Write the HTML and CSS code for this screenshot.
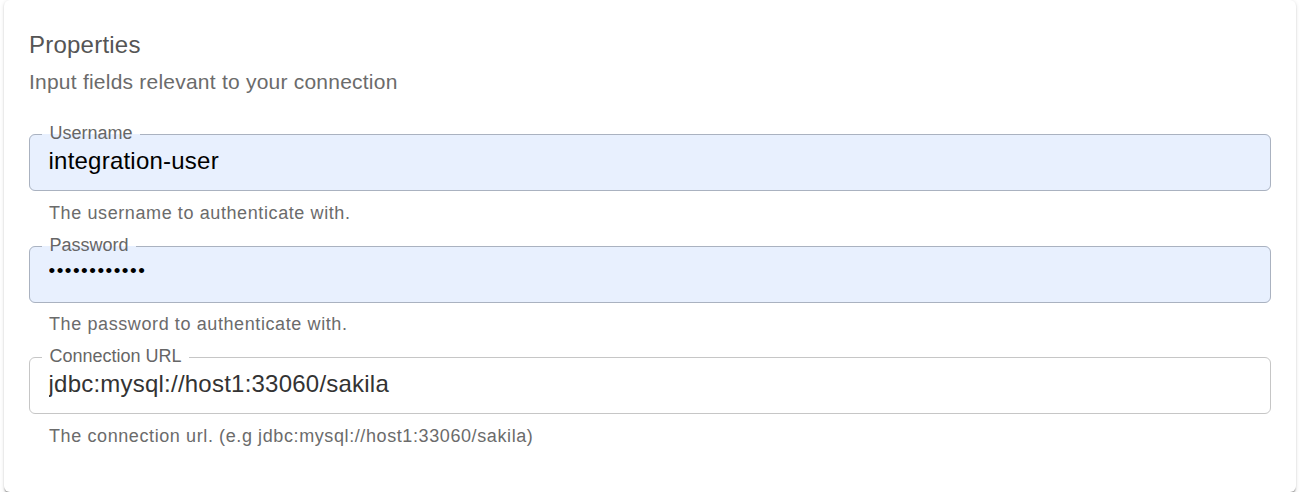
FILE: index.html
```html
<!DOCTYPE html>
<html lang="en">
<head>
<meta charset="utf-8">
<title>Properties</title>
<link rel="stylesheet" href="styles.css">
</head>
<body>
<section class="card">
  <h2 class="title">Properties</h2>
  <p class="subtitle">Input fields relevant to your connection</p>

  <div class="field">
    <fieldset class="box box-filled">
      <legend class="label">Username</legend>
      <input class="value value-filled" type="text" value="integration-user" readonly>
    </fieldset>
    <p class="helper">The username to authenticate with.</p>
  </div>

  <div class="field">
    <fieldset class="box box-filled">
      <legend class="label">Password</legend>
      <input class="value value-filled value-secret" type="password" value="passwordxyz1" readonly>
    </fieldset>
    <p class="helper">The password to authenticate with.</p>
  </div>

  <div class="field">
    <fieldset class="box">
      <legend class="label">Connection URL</legend>
      <input class="value" type="text" value="jdbc:mysql://host1:33060/sakila" readonly>
    </fieldset>
    <p class="helper">The connection url. (e.g jdbc:mysql://host1:33060/sakila)</p>
  </div>
</section>
</body>
</html>
```

FILE: styles.css
```css
* { box-sizing: border-box; }

html, body {
  margin: 0;
  padding: 0;
  background: #ffffff;
}

body {
  font-family: "Liberation Sans", Arial, Helvetica, sans-serif;
}

.card {
  margin: 0 4px;
  height: 492px;
  padding: 27px 25px 43px 25px;
  background: #ffffff;
  border-radius: 6px;
  box-shadow: 0 3px 1.5px -1.5px rgba(0, 0, 0, 0.2),
              0 1.5px 1.5px 0 rgba(0, 0, 0, 0.14),
              0 1.5px 4.5px 0 rgba(0, 0, 0, 0.12);
}

.title {
  margin: 0;
  font-size: 24px;
  line-height: 36px;
  font-weight: 400;
  letter-spacing: 0.225px;
  color: #555555;
}

.subtitle {
  margin: 4px 0 0 0;
  font-size: 21px;
  line-height: 30px;
  letter-spacing: 0.225px;
  color: #6b6b6b;
}

.field {
  margin-top: 8px;
}

.subtitle + .field {
  margin-top: 27px;
}

.box {
  margin: 0;
  min-width: 0;
  padding: 0 12px;
  border: 1px solid #c6c6c6;
  border-radius: 6px;
  background: #ffffff;
}

.box-filled {
  background: #e8f0fe;
  border-color: #aab2c0;
}

.label {
  padding: 0 7.5px 3px 7.5px;
  font-size: 18px;
  line-height: 18px;
  color: #666666;
}

.value {
  display: block;
  width: 100%;
  height: 45px;
  margin: 0;
  padding: 4px 0 17px 6.5px;
  border: 0;
  outline: none;
  background: transparent;
  font-family: "Liberation Sans", Arial, Helvetica, sans-serif;
  font-size: 24px;
  line-height: 24px;
  letter-spacing: 0.225px;
  color: #333333;
}

.value-filled {
  color: #000000;
}

.value-secret {
  padding-top: 2px;
  padding-bottom: 19px;
  font-size: 19px;
  letter-spacing: 1.5px;
}

.helper {
  margin: 6.5px 0 0 20px;
  font-size: 18px;
  line-height: 30px;
  letter-spacing: 0.6px;
  color: #6b6b6b;
}
```
